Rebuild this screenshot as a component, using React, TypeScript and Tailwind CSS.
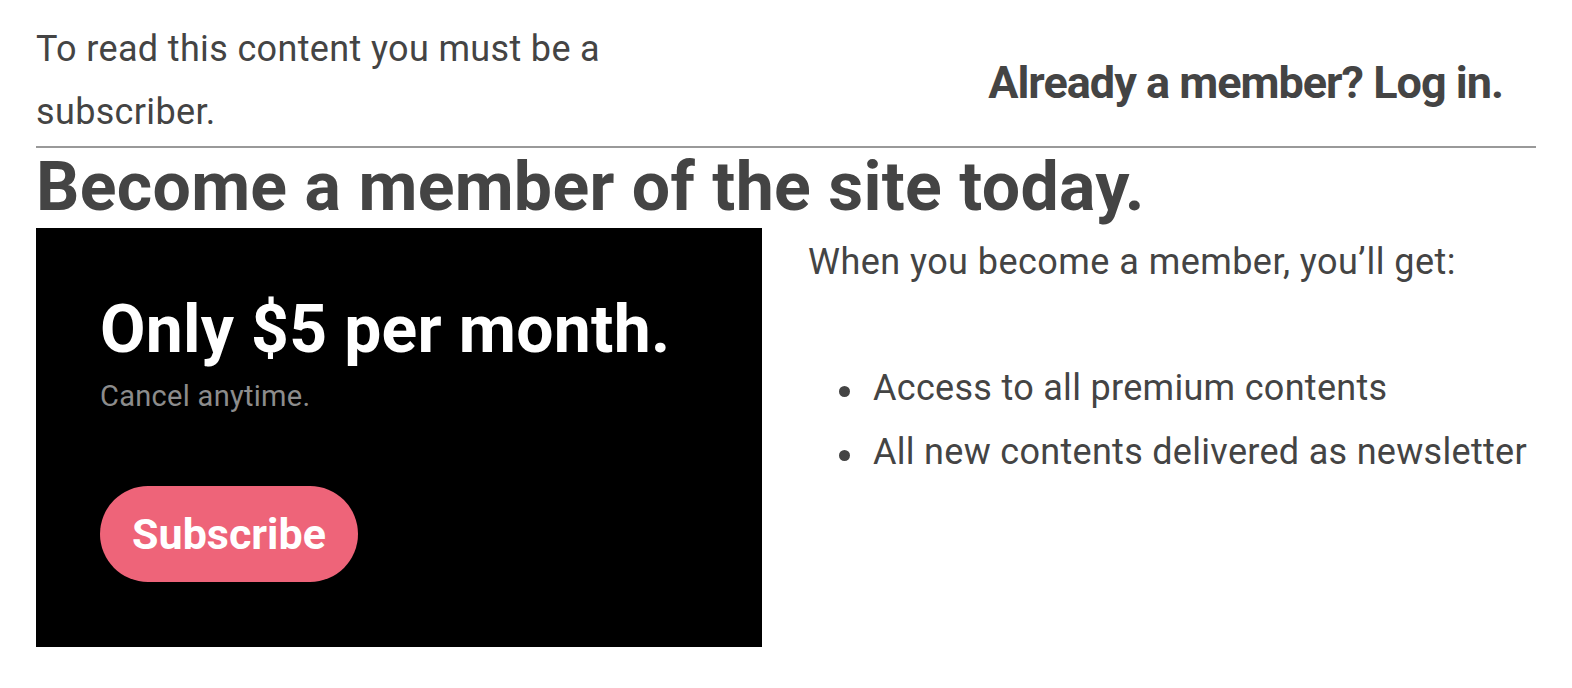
export default function App() {
  const font = { fontFamily: "Roboto, 'Noto Sans', sans-serif" };
  return (
    <div className="bg-white min-h-[688px] px-[36px] text-[#444]" style={font}>
      <div className="flex pt-[18px]">
        <p className="w-[726px] text-[36px] leading-[63px] tracking-[0.35px] pr-[120px]">
          To read this content you must be a subscriber.
        </p>
        <div className="flex-1 flex items-center justify-end pr-[33px]">
          <a className="text-[45px] leading-none font-bold tracking-[-1px] mt-[3px] whitespace-nowrap">
            Already a member? Log in.
          </a>
        </div>
      </div>
      <hr className="mt-[2px] border-0 h-[2px] bg-[#999]" />
      <h1 className="mt-[1px] text-[68px] leading-[76px] font-bold tracking-[0.3px] whitespace-nowrap">
        Become a member of the site today.
      </h1>
      <div className="mt-[3px] grid grid-cols-[726px_1fr] gap-[46px]">
        <div className="bg-black pl-[64px] pt-[69px] pb-[65px]">
          <div className="text-white text-[66px] leading-none font-bold tracking-[0.3px] whitespace-nowrap">
            Only $5 per month.
          </div>
          <div className="mt-[19px] text-[29px] leading-none tracking-[0.3px] text-[#8c8c8c]">Cancel anytime.</div>
          <button className="mt-[75px] w-[258px] h-[96px] rounded-full bg-[#ee6479] text-white text-[43px] font-bold flex items-center justify-center">
            Subscribe
          </button>
        </div>
        <div className="pt-[3px]">
          <p className="text-[36px] leading-[63px] tracking-[0.45px] whitespace-nowrap">When you become a member, you’ll get:</p>
          <ul className="mt-[62px]">
            {["Access to all premium contents", "All new contents delivered as newsletter"].map((t) => (
              <li key={t} className="flex items-center text-[36px] leading-[64px] tracking-[0.3px] whitespace-nowrap">
                <span className="ml-[31px] mt-[6px] w-[11px] h-[11px] rounded-full bg-[#444] shrink-0" />
                <span className="ml-[23px]">{t}</span>
              </li>
            ))}
          </ul>
        </div>
      </div>
    </div>
  );
}
